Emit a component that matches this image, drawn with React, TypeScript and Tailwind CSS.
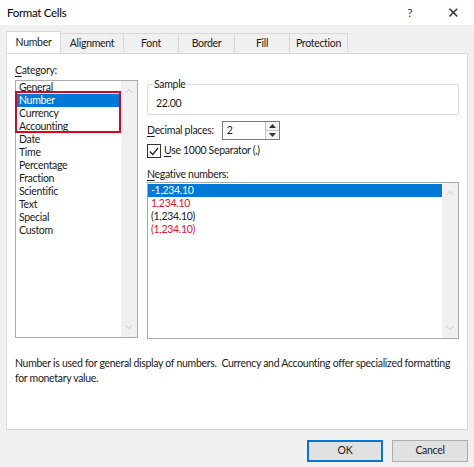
import { ChevronUp, ChevronDown } from "lucide-react";

const categories = ["General", "Number", "Currency", "Accounting", "Date", "Time", "Percentage", "Fraction", "Scientific", "Text", "Special", "Custom"];

const negatives = [
  { text: "-1,234.10", red: false },
  { text: "1,234.10", red: true },
  { text: "(1,234.10)", red: false },
  { text: "(1,234.10)", red: true },
];

const tabs = ["Number", "Alignment", "Font", "Border", "Fill", "Protection"];
const tabWidths = ["w-[55px]", "w-[64px]", "w-[56px]", "w-[57px]", "w-[56px]", "w-[59px]"];

const ScrollBar = () => (
  <div className="flex w-[16px] flex-col items-center justify-between bg-[#f0f0f0] py-[4px]">
    <ChevronUp className="h-[12px] w-[12px] text-[#b5b5b5]" strokeWidth={1.5} />
    <ChevronDown className="h-[12px] w-[12px] text-[#b5b5b5]" strokeWidth={1.5} />
  </div>
);

export default function App() {
  return (
    <div
      className="flex h-[467px] w-[474px] flex-col bg-[#f0f0f0] text-[10.5px] tracking-[-0.3px] text-[#1a1a1a]"
      style={{ fontFamily: 'Lato, "Noto Sans", sans-serif' }}
    >
      {/* Title bar */}
      <div className="flex h-[25px] items-center bg-white pl-[7px]">
        <span className="text-[11.5px] text-black">Format Cells</span>
        <span className="ml-auto text-[12px] text-[#333]">?</span>
        <span className="ml-[35px] mr-[14px] text-[15px] font-light text-[#333]">✕</span>
      </div>

      {/* Tabs */}
      <div className="mt-[6px] flex h-[22px] items-end pl-[6px]">
        {tabs.map((t, i) => (
          <div
            key={t}
            className={`flex ${tabWidths[i]} items-center justify-center border border-b-0 border-[#d9d9d9] ${
              i === 0 ? "h-[22px] bg-white" : "-ml-px h-[20px] bg-[#f0f0f0]"
            }`}
          >
            {t}
          </div>
        ))}
      </div>

      {/* Panel */}
      <div className="mx-[6px] flex h-[377px] flex-col border border-[#d9d9d9] bg-white px-[8px]">
        <div className="mt-[9px] flex gap-[9px]">
          {/* Category */}
          <div className="flex w-[123px] flex-col">
            <div className="h-[17px] leading-[14px]">
              <span className="underline underline-offset-2">C</span>ategory:
            </div>
            <div className="flex h-[258px] border border-[#aaaaaa] bg-white">
              <div className="relative flex-1">
                {categories.map((c, i) => (
                  <div
                    key={c}
                    className={`mx-[1px] h-[13px] pl-[2px] leading-[12px] ${i === 1 ? "bg-[#0078d7] text-white" : ""}`}
                  >
                    {c}
                  </div>
                ))}
                <div className="absolute left-[-1px] top-[10px] h-[42px] w-[106px] border-2 border-[#e3001b]" />
              </div>
              <ScrollBar />
            </div>
          </div>

          {/* Right column */}
          <div className="flex flex-1 flex-col pt-[21px]">
            <div className="relative h-[31px] rounded-[2px] border border-[#dcdcdc]">
              <span className="absolute left-[5px] top-[-8px] bg-white px-[1px] leading-[14px]">Sample</span>
              <div className="pl-[8px] pt-[11px] leading-[14px]">22.00</div>
            </div>

            <div className="mt-[6px] flex h-[19px] items-center">
              <span>
                <span className="underline underline-offset-2">D</span>ecimal places:
              </span>
              <div className="ml-[8px] flex h-[19px] w-[58px] border border-[#7a7a7a]">
                <span className="flex-1 pl-[4px] leading-[16px]">2</span>
                <div className="flex w-[14px] flex-col border-l border-[#c4c4c4] bg-[#f3f3f3]">
                  <div className="flex flex-1 items-center justify-center border-b border-[#c4c4c4]">
                    <svg width="7" height="4" viewBox="0 0 7 4"><path d="M0 4L3.5 0L7 4Z" fill="#333" /></svg>
                  </div>
                  <div className="flex flex-1 items-center justify-center">
                    <svg width="7" height="4" viewBox="0 0 7 4"><path d="M0 0L3.5 4L7 0Z" fill="#333" /></svg>
                  </div>
                </div>
              </div>
            </div>

            <div className="mt-[4px] flex h-[14px] items-center gap-[3px]">
              <div className="flex h-[14px] w-[14px] items-center justify-center border border-[#333]">
                <svg width="10" height="9" viewBox="0 0 10 9">
                  <path d="M1 4.5L3.8 7.5L9 1" fill="none" stroke="#222" strokeWidth="1.3" />
                </svg>
              </div>
              <span>
                <span className="underline underline-offset-2">U</span>se 1000 Separator (,)
              </span>
            </div>

            <div className="mt-[9px] h-[15px] leading-[14px]">
              <span className="underline underline-offset-2">N</span>egative numbers:
            </div>
            <div className="flex h-[157px] border border-[#aaaaaa] bg-white">
              <div className="flex-1 pt-[1px]">
                {negatives.map((n, i) => (
                  <div
                    key={i}
                    className={`h-[13px] pl-[3px] leading-[12px] ${
                      i === 0 ? "bg-[#0078d7] text-white" : n.red ? "text-[#e81123]" : ""
                    }`}
                  >
                    {n.text}
                  </div>
                ))}
              </div>
              <ScrollBar />
            </div>
          </div>
        </div>

        <p className="mt-[17px] leading-[15px]">
          Number is used for general display of numbers.&nbsp; Currency and Accounting offer specialized formatting
          for monetary value.
        </p>
      </div>

      {/* Buttons */}
      <div className="mt-[10px] flex justify-end gap-[9px] pr-[6px]">
        <button className="h-[22px] w-[76px] border-2 border-[#0078d7] bg-[#e1e1e1]">OK</button>
        <button className="h-[22px] w-[76px] border border-[#adadad] bg-[#e1e1e1]">Cancel</button>
      </div>
    </div>
  );
}
